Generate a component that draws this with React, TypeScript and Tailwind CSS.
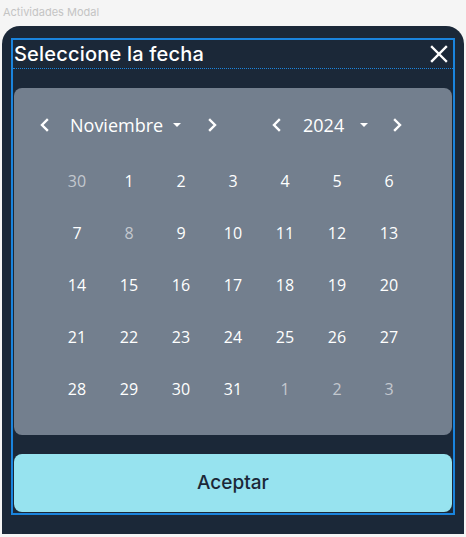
import React from 'react'

const weeks: { d: number; dim?: boolean }[][] = [
  [{ d: 30, dim: true }, { d: 1 }, { d: 2 }, { d: 3 }, { d: 4 }, { d: 5 }, { d: 6 }],
  [{ d: 7 }, { d: 8, dim: true }, { d: 9 }, { d: 10 }, { d: 11 }, { d: 12 }, { d: 13 }],
  [{ d: 14 }, { d: 15 }, { d: 16 }, { d: 17 }, { d: 18 }, { d: 19 }, { d: 20 }],
  [{ d: 21 }, { d: 22 }, { d: 23 }, { d: 24 }, { d: 25 }, { d: 26 }, { d: 27 }],
  [{ d: 28 }, { d: 29 }, { d: 30 }, { d: 31 }, { d: 1, dim: true }, { d: 2, dim: true }, { d: 3, dim: true }],
]

function Chevron({ dir }: { dir: 'left' | 'right' }) {
  return (
    <svg width="16" height="16" viewBox="0 0 16 16" fill="none" stroke="white" strokeWidth="2.4" strokeLinecap="square">
      {dir === 'left' ? <path d="M10 3 5 8l5 5" /> : <path d="M6 3l5 5-5 5" />}
    </svg>
  )
}

function Caret() {
  return (
    <svg width="10" height="6" viewBox="0 0 10 6" fill="white">
      <path d="M1 1h8L5 5z" />
    </svg>
  )
}

export default function App() {
  return (
    <div className="w-[466px] h-[537px] bg-[#f5f5f5] overflow-hidden font-['Open_Sans','Noto_Sans',sans-serif]">
      <div className="h-[26px] pl-[3px] pt-[5px] text-[11px] leading-[14px] text-[#c4c4c4] font-['Inter',sans-serif]">
        Actividades Modal
      </div>
      <div className="mx-[2px] h-[508px] bg-[#1b2838] rounded-t-[18px] pt-[12px] px-[9px]">
        <div className="border-2 border-[#1a84dd] h-[477px] flex flex-col">
          {/* titulo */}
          <div className="h-[29px] flex items-center justify-between border-b border-dotted border-[#1a84dd] pl-[1px] pr-[5px]">
            <span className="text-white text-[20px] font-medium leading-none font-['Inter',sans-serif] tracking-[0.2px]">
              Seleccione la fecha
            </span>
            <svg width="18" height="18" viewBox="0 0 18 18" stroke="white" strokeWidth="2.4" strokeLinecap="square">
              <path d="M2 2l14 14M16 2 2 16" />
            </svg>
          </div>

          {/* calendario */}
          <div className="mt-[19px] mx-[1px] h-[347px] bg-[#737f8e] rounded-[8px] text-white">
            <div className="h-[74px] flex items-center pl-[23px]">
              <Chevron dir="left" />
              <span className="ml-[17px] w-[102px] text-[18px] leading-none">Noviembre</span>
              <Caret />
              <span className="ml-[22px]"><Chevron dir="right" /></span>
              <span className="ml-[49px]"><Chevron dir="left" /></span>
              <span className="ml-[18px] w-[56px] text-[18px] leading-none">2024</span>
              <Caret />
              <span className="ml-[20px]"><Chevron dir="right" /></span>
            </div>
            <div className="-mt-[7px] grid grid-cols-[repeat(7,52px)] justify-center">
              {weeks.flat().map((c, i) => (
                <div
                  key={i}
                  className={`h-[52px] flex items-center justify-center text-[16px] ${c.dim ? 'text-[#c3c8cf]' : 'text-white'}`}
                >
                  {c.d}
                </div>
              ))}
            </div>
          </div>

          {/* boton */}
          <button className="mt-[19px] mx-[1px] h-[58px] bg-[#97e3ef] rounded-[8px] text-[#1b2838] text-[19px] font-medium font-['Inter',sans-serif]">
            Aceptar
          </button>
        </div>
      </div>
    </div>
  )
}
